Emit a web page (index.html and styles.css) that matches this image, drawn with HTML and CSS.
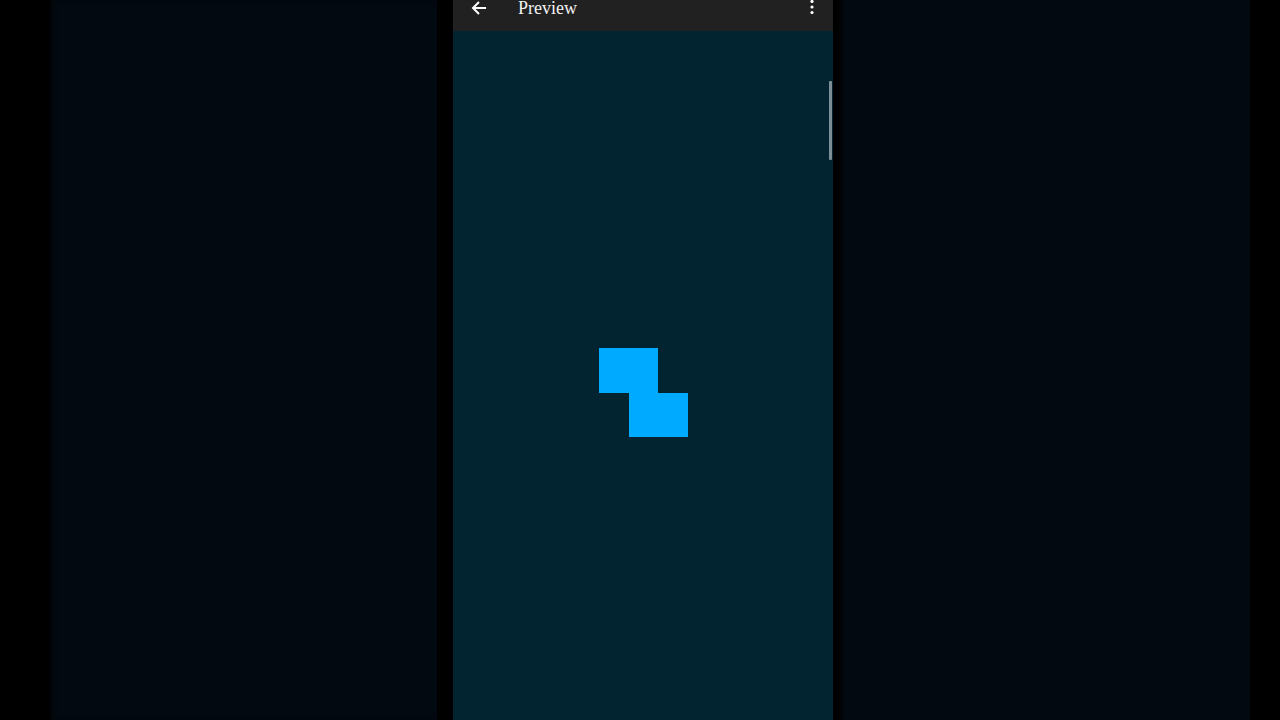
FILE: index.html
```html
<!DOCTYPE html>
<html>
<head>
<meta charset="utf-8">
<link rel="stylesheet" href="styles.css">
</head>
<body>
<div class="stage">
  <div class="side side-left"></div>
  <div class="gap gap-left"></div>
  <div class="phone">
    <div class="appbar">
      <svg class="back" width="16" height="16" viewBox="0 0 16 16"><path d="M15 8H2.5M8 2L2 8l6 6" fill="none" stroke="#fff" stroke-width="2"/></svg>
      <span class="title">Preview</span>
      <svg class="more" width="4" height="16" viewBox="0 0 4 16"><circle cx="2" cy="1.5" r="1.6" fill="#fff"/><circle cx="2" cy="7" r="1.6" fill="#fff"/><circle cx="2" cy="12.5" r="1.6" fill="#fff"/></svg>
    </div>
    <div class="content">
      <div class="scrollbar"></div>
      <div class="shape">
        <div class="blk blk-a"></div>
        <div class="blk blk-b"></div>
      </div>
    </div>
  </div>
  <div class="gap gap-right"></div>
  <div class="side side-right"></div>
</div>
</body>
</html>
```

FILE: styles.css
```css
html, body { margin: 0; padding: 0; background: #000; }
.stage { display: flex; width: 1280px; height: 720px; padding-left: 50px; padding-right: 30px; box-sizing: border-box; overflow: hidden; }
.side { background: #020910; height: 720px; }
.side-left { width: 387px; box-shadow: inset 4px 0 6px -3px #000; }
.side-right { width: 405px; }
.gap { background: #000; height: 720px; }
.gap-left { width: 16px; }
.gap-right { width: 12px; background: linear-gradient(to right, #000 40%, #020910); }
.phone { width: 380px; height: 720px; display: flex; flex-direction: column; background: #022430; }
.appbar { height: 31px; background: #212121; display: flex; align-items: flex-start; padding-left: 18px; padding-right: 19px; box-sizing: border-box; }
.title { font-family: "Liberation Serif", "DejaVu Serif", serif; color: #f2f2f2; font-size: 18px; line-height: 17px; margin-left: 31px; flex: 1; }
.content { flex: 1; position: relative; display: flex; justify-content: center; }
.scrollbar { position: absolute; right: 1px; top: 50px; width: 3px; height: 79px; background: #7d8f95; border-radius: 1px; }
.shape { position: relative; width: 90px; height: 90px; margin-top: 317px; margin-left: 1px; }
.blk { position: absolute; width: 59px; height: 45px; background: #00aaff; }
.blk-a { left: 0; top: 0; }
.blk-b { left: 30px; top: 45px; height: 44px; }
```
